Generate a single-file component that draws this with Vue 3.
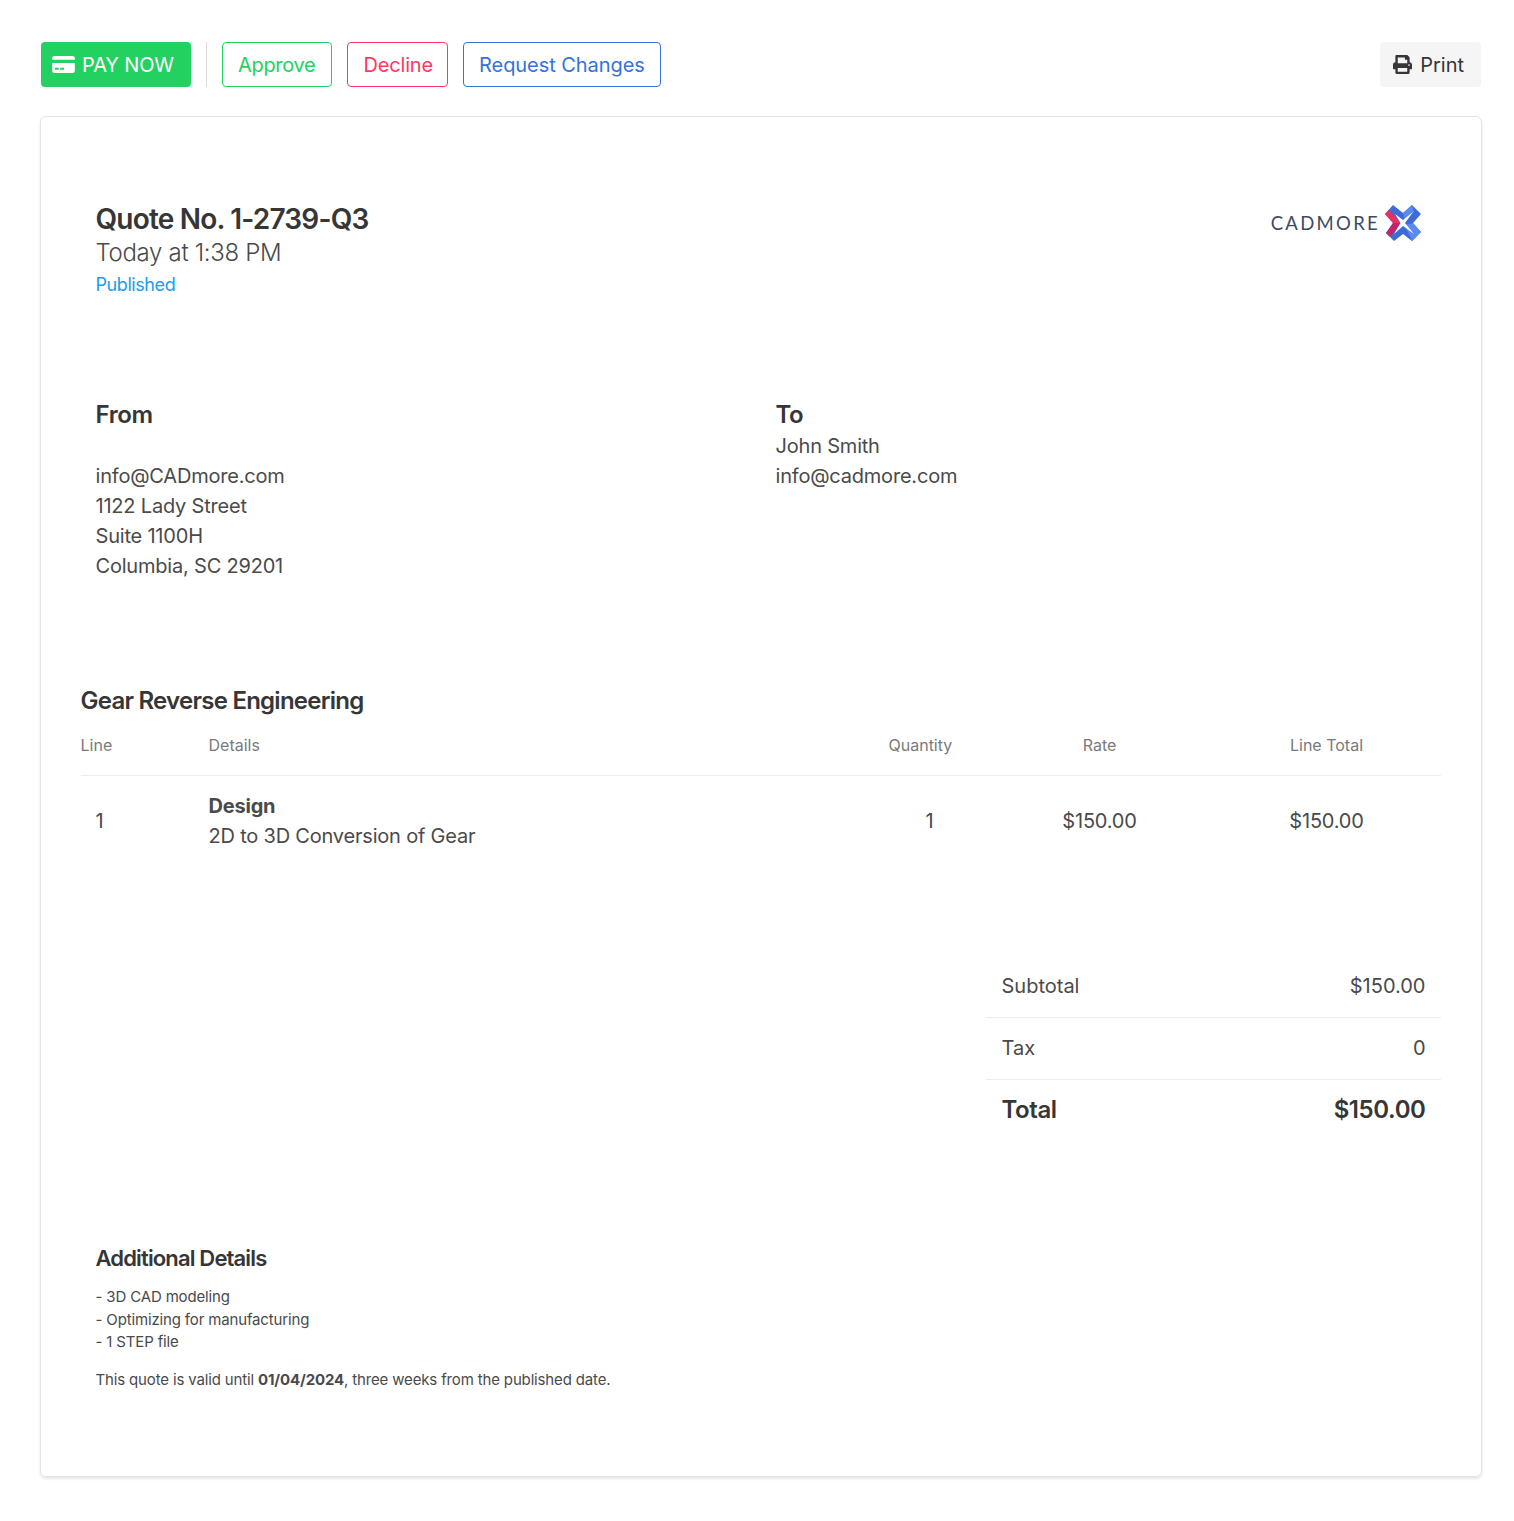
<script setup>
const fromLines = ['info@CADmore.com', '1122 Lady Street', 'Suite 1100H', 'Columbia, SC 29201']
const notes = ['- 3D CAD modeling', '- Optimizing for manufacturing', '- 1 STEP file']
</script>

<template>
  <div class="page">
    <div class="toolbar">
      <button class="btn pay">
        <svg class="card-icon" viewBox="0 0 24 18" width="23" height="17" aria-hidden="true">
          <path fill="#fff" fill-rule="evenodd" d="M2.5 0h19A2.5 2.5 0 0 1 24 2.500V4H0V2.500A2.500 2.500 0 0 1 2.500 0zM0 7.500h24v8A2.500 2.500 0 0 1 21.500 18h-19A2.500 2.500 0 0 1 0 15.500zM3 12.500v2h4v-2zm5.500 0v2h4v-2z"/>
        </svg>
        PAY NOW
      </button>
      <span class="divider"></span>
      <button class="btn outline green">Approve</button>
      <button class="btn outline red">Decline</button>
      <button class="btn outline blue">Request Changes</button>
      <button class="btn print">
        <svg viewBox="0 0 512 512" width="19" height="19" aria-hidden="true">
          <path fill="#363636" d="M448 192V77.250c0-8.490-3.370-16.620-9.370-22.630L393.370 9.370c-6-6-14.140-9.370-22.630-9.370H96C78.330 0 64 14.330 64 32v160c-35.350 0-64 28.650-64 64v112c0 8.840 7.160 16 16 16h48v96c0 17.670 14.330 32 32 32h320c17.670 0 32-14.330 32-32v-96h48c8.840 0 16-7.160 16-16V256c0-35.350-28.650-64-64-64zm-64 256H128v-96h256v96zm0-224H128V64h192v48c0 8.840 7.160 16 16 16h48v96zm48 72c-13.250 0-24-10.750-24-24 0-13.260 10.750-24 24-24s24 10.740 24 24c0 13.250-10.750 24-24 24z"/>
        </svg>
        Print
      </button>
    </div>

    <div class="sheet">
      <header class="head">
        <div>
          <h1>Quote No. 1-2739-Q3</h1>
          <div class="date">Today at 1:38 PM</div>
          <div class="status">Published</div>
        </div>
        <div class="logo">
          <span class="logo-text">CADMORE</span>
          <svg viewBox="0 0 36 36" width="36" height="36" aria-hidden="true">
            <path fill="#3f6bd9" d="M8 0 18 8 27 0 36 9 28 18 36 27 27 36 18 29 9 36 1 28 8 18 0 9z"/>
            <path fill="#5b8bf0" d="M36 27 27 36 20 20 28 18z"/>
            <path fill="#5b8bf0" d="M18 8 27 0 29 7 20 16z"/>
            <path fill="#e9305f" d="M0 9 4 5 16 18 8 18z"/>
            <path fill="#c4246a" d="M1 28 8 18 16 18 5 32z"/>
            <path fill="#fff" d="M28 7 20 18 29 29 18 21 9 29 15.500 18 10 9 18 15z"/>
          </svg>
        </div>
      </header>

      <section class="parties">
        <div class="party">
          <h2 class="from-title">From</h2>
          <div v-for="line in fromLines" :key="line">{{ line }}</div>
        </div>
        <div class="party">
          <h2 class="to-title">To</h2>
          <div>John Smith</div>
          <div>info@cadmore.com</div>
        </div>
      </section>

      <section class="items">
        <h3>Gear Reverse Engineering</h3>
        <div class="row header">
          <div class="c-line">Line</div>
          <div class="c-details">Details</div>
          <div class="c-qty">Quantity</div>
          <div class="c-rate">Rate</div>
          <div class="c-total">Line Total</div>
        </div>
        <div class="row body">
          <div class="c-line indent">1</div>
          <div class="c-details"><strong>Design</strong><br />2D to 3D Conversion of Gear</div>
          <div class="c-qty center-qty">1</div>
          <div class="c-rate">$150.00</div>
          <div class="c-total">$150.00</div>
        </div>
      </section>

      <section class="totals">
        <div class="t-row"><span>Subtotal</span><span>$150.00</span></div>
        <div class="t-row"><span>Tax</span><span>0</span></div>
        <div class="t-row grand"><span>Total</span><span>$150.00</span></div>
      </section>

      <section class="details">
        <h4>Additional Details</h4>
        <p class="notes"><span v-for="n in notes" :key="n">{{ n }}</span></p>
        <p class="valid">This quote is valid until <strong>01/04/2024</strong>, three weeks from the published date.</p>
      </section>
    </div>
  </div>
</template>

<style>
html, body { margin: 0; background: #fff; }
</style>

<style scoped>
.page {
  box-sizing: border-box;
  width: 1514px;
  height: 1521px;
  padding: 42px 33px 0 41px;
  font-family: Inter, "Liberation Sans", sans-serif;
  color: #4a4a4a;
  font-size: 20px;
  line-height: 30px;
}
.toolbar { display: flex; align-items: stretch; height: 45px; }
.btn {
  box-sizing: border-box;
  height: 45px;
  padding: 0 15px;
  font: inherit;
  border: 1px solid transparent;
  border-radius: 4px;
  background: #fff;
  display: inline-flex;
  align-items: center;
}
.pay { background: #23d160; color: #fff; width: 150px; padding: 0 0 0 10px; gap: 7px; letter-spacing: -0.15px; }
.divider { width: 1px; background: #dbdbdb; margin: 0 15px; }
.outline { margin-right: 15px; }
.green { border-color: #23d160; color: #23d160; letter-spacing: -0.32px; padding-right: 16px; }
.red { border-color: #ff3860; color: #ff3860; letter-spacing: -0.15px; padding-right: 14px; }
.blue { border-color: #3273dc; color: #3273dc; letter-spacing: -0.06px; }
.print { margin-left: auto; background: #f5f5f5; color: #363636; gap: 8px; padding: 0 16px 0 12px; }

.sheet {
  box-sizing: border-box;
  margin: 29px -1px 0 -1px;
  height: 1361px;
  border: 1px solid #e4e4e4;
  border-radius: 6px;
  box-shadow: 0 2px 3px rgba(10, 10, 10, 0.1);
  padding: 0 40px 0 39.500px;
  letter-spacing: -0.2px;
}
.head {
  display: flex;
  justify-content: space-between;
  padding: 85px 20px 0 15px;
  height: 283px;
  box-sizing: border-box;
}
h1 { margin: 0; font-size: 28px; line-height: 35px; font-weight: 600; color: #363636; letter-spacing: -0.8px; }
.date { font-size: 24px; line-height: 31px; color: #4a4a4a; font-weight: 300; letter-spacing: -0.32px; }
.status { font-size: 18px; line-height: 34px; color: #209cee; letter-spacing: -0.42px; }
.logo { display: flex; align-items: center; gap: 5px; height: 40px; margin-top: 1px; }
.logo-text { font-family: Lato, sans-serif; font-size: 18.500px; letter-spacing: 2.300px; color: #3c4a63; line-height: 40px; }

.parties { display: flex; padding-left: 15px; }
.party { flex: 0 0 680px; }
h2 { margin: 0; font-size: 24px; line-height: 30px; font-weight: 600; color: #363636; letter-spacing: -0.4px; }
.from-title { margin-bottom: 31px; }
.to-title { margin-bottom: 1px; }

.items { margin-top: 105px; }
h3 { margin: 0; font-size: 24px; line-height: 30px; font-weight: 600; color: #363636; letter-spacing: -0.75px; }
.row { display: flex; width: 1360px; }
.header { margin-top: 14px; height: 45px; line-height: 30px; font-size: 16px; color: #7a7a7a; border-bottom: 1px solid #ededed; letter-spacing: 0; }
.body { padding-top: 15px; }
.c-line { width: 128px; }
.indent { padding-left: 15px; box-sizing: border-box; align-self: center; }
.c-details { width: 680px; }
.c-qty { width: 112px; }
.center-qty { text-align: center; align-self: center; width: 82px; margin-right: 30px; }
.c-rate { width: 198px; text-align: center; }
.c-total { width: 242px; padding-left: 14px; box-sizing: border-box; text-align: center; }
.body .c-rate, .body .c-total { align-self: center; }
strong { font-weight: 700; }

.totals { width: 455px; margin: 105px 0 0 905px; }
.t-row { display: flex; justify-content: space-between; height: 62px; box-sizing: border-box; align-items: center; padding: 0 15px 2px 16px; border-bottom: 1px solid #ededed; letter-spacing: 0; }
.grand { border-bottom: 0; font-size: 24px; font-weight: 600; color: #363636; letter-spacing: -0.4px; }

.details { margin-top: 101px; padding-left: 15px; font-size: 15px; line-height: 22.500px; letter-spacing: -0.15px; }
h4 { margin: 0 0 13px; font-size: 22px; line-height: 30px; font-weight: 600; color: #363636; letter-spacing: -0.85px; }
.notes { margin: 0 0 15px; }
.notes span { display: block; }
.valid { margin: 0; }
</style>
